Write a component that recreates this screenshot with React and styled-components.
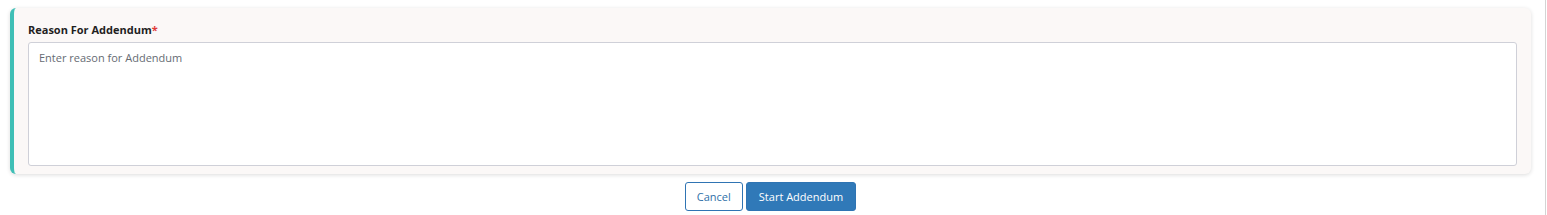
import styled, { createGlobalStyle } from "styled-components";

const Global = createGlobalStyle`
  body {
    margin: 0;
    font-family: "Open Sans", "Liberation Sans", sans-serif;
    background: #fff;
  }
`

const Page = styled.div`
  width: 1546px;
  min-height: 215px;
  border-right: 1px solid #d4d4d4;
  padding: 8px 14px 0 10px;
  box-sizing: border-box;
`

const Card = styled.div`
  background: #fbf8f7;
  border-left: 4px solid #3fbfb6;
  border-radius: 6px;
  box-shadow: 0 1px 4px rgba(0, 0, 0, 0.14);
  padding: 15px 14px 8px 14px;
`

const Label = styled.label`
  display: block;
  font-size: 11px;
  font-weight: 700;
  color: #1f1f1f;
  margin-bottom: 5px;
  line-height: 14px;

  span {
    color: #e03a3a;
  }
`

const TextArea = styled.textarea`
  display: block;
  width: 100%;
  height: 124px;
  box-sizing: border-box;
  resize: none;
  border: 1px solid #cfd0d8;
  border-radius: 3px;
  background: #fff;
  padding: 7px 10px;
  font-family: "Open Sans", "Liberation Sans", sans-serif;
  font-size: 11px;
  line-height: 15px;
  outline: none;

  &::placeholder {
    color: #666b73;
  }
`

const Actions = styled.div`
  display: flex;
  justify-content: center;
  gap: 3px;
  margin-top: 8px;
`

const Button = styled.button`
  height: 29px;
  padding: 0 ${({primary}) => primary ? '12px' : '11px'};
  border-radius: 3px;
  font-family: "Open Sans", "Liberation Sans", sans-serif;
  font-size: 11px;
  cursor: pointer;
  border: 1px solid #2f74b3;
  background: ${({primary}) => primary ? '#3079b8' : '#fff'};
  color: ${({primary}) => primary ? '#fff' : '#2f6fa8'};
`

const App = () => {
    return (
        <>
            <Global />
            <Page>
                <Card>
                    <Label>Reason For Addendum<span>*</span></Label>
                    <TextArea placeholder="Enter reason for Addendum" />
                </Card>
                <Actions>
                    <Button>Cancel</Button>
                    <Button primary>Start Addendum</Button>
                </Actions>
            </Page>
        </>
    );
}

export default App;
